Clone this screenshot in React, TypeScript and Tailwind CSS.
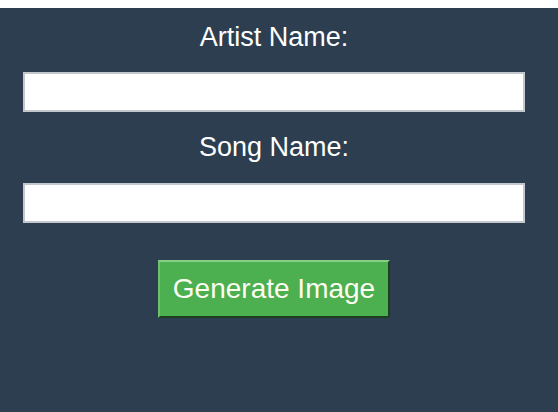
import { useState } from 'react';

export default function App() {
  const [artist, setArtist] = useState('');
  const [song, setSong] = useState('');

  return (
    <div className="h-[412px] w-[558px] bg-white pt-2" style={{ fontFamily: '"Liberation Sans", Arial, sans-serif' }}>
      <div className="flex h-[404px] flex-col items-center bg-[#2c3e50] pl-[23px] pr-[33px] pt-[14px]">
        <label className="text-[27px] leading-[31px] text-white">Artist Name:</label>
        <input
          value={artist}
          onChange={(e) => setArtist(e.target.value)}
          className="mt-[19px] h-[40px] w-full border-2 border-[#c2c8ce] bg-white px-2 text-lg outline-none"
        />
        <label className="mt-[20px] text-[27px] leading-[31px] text-white">Song Name:</label>
        <input
          value={song}
          onChange={(e) => setSong(e.target.value)}
          className="mt-[20px] h-[40px] w-full border-2 border-[#c2c8ce] bg-white px-2 text-lg outline-none"
        />
        <button className="mt-[37px] h-[58px] w-[232px] border-2 border-t-[#86cf88] border-l-[#6cc06f] border-b-[#1f3d20] border-r-[#1f3d20] bg-[#4caf50] text-[28px] text-[#fdfdf0]">
          Generate Image
        </button>
      </div>
    </div>
  );
}
